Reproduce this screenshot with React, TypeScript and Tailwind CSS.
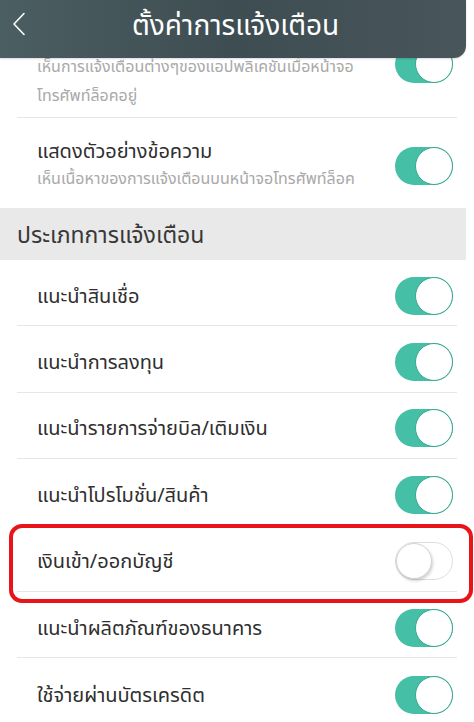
import React from "react";

type Item = { title: string; on: boolean };

const types: Item[] = [
  { title: "แนะนำสินเชื่อ", on: true },
  { title: "แนะนำการลงทุน", on: true },
  { title: "แนะนำรายการจ่ายบิล/เติมเงิน", on: true },
  { title: "แนะนำโปรโมชั่น/สินค้า", on: true },
  { title: "เงินเข้า/ออกบัญชี", on: false },
  { title: "แนะนำผลิตภัณฑ์ของธนาคาร", on: true },
  { title: "ใช้จ่ายผ่านบัตรเครดิต", on: true },
];

function Toggle({ on }: { on: boolean }) {
  if (on) {
    return (
      <div className="flex h-[38px] w-[58px] shrink-0 items-center justify-end rounded-full bg-[#45bfa6]">
        <div className="h-[38px] w-[38px] rounded-full border-[1.5px] border-[#3aa78f] bg-white" />
      </div>
    );
  }
  return (
    <div className="flex h-[38px] w-[58px] shrink-0 items-center justify-start rounded-full border border-[#dedede] bg-white">
      <div className="h-[36px] w-[36px] rounded-full border border-[#d4d4d4] bg-white shadow-[1px_2px_3px_rgba(0,0,0,0.18)]" />
    </div>
  );
}

export default function App() {
  return (
    <div
      className="relative h-[722px] w-[474px] overflow-hidden bg-white text-[#2f2f2f]"
      style={{ fontFamily: '"Noto Sans", "Noto Sans Thai", sans-serif' }}
    >
      <header className="absolute left-0 top-0 z-10 flex h-[58px] w-[466px] items-start rounded-br-[12px] bg-gradient-to-r from-[#4b5e62] via-[#3e4d52] to-[#48565b] pt-[8px] shadow-[0_1px_2px_rgba(0,0,0,0.15)]">
        <svg className="ml-[11px] mt-[4px] h-[24px] w-[16px]" viewBox="0 0 16 24" fill="none">
          <path d="M13 1.5 L3 12 L13 22.5" stroke="white" strokeWidth="1.6" strokeLinecap="round" strokeLinejoin="round" />
        </svg>
        <h1 className="ml-[105px] text-[28px] leading-[32px] text-white">ตั้งค่าการแจ้งเตือน</h1>
      </header>

      <div className="pt-[18px]">
        <div className="mx-[17px] flex h-[100px] items-start justify-between border-b border-[#e6e6e6] pl-5 pr-1">
          <div className="pt-[34px]">
            <div className="w-[320px] text-[16px] leading-[29px] text-[#a9a9a9]">
              เห็นการแจ้งเตือนต่างๆของแอปพลิเคชันเมื่อหน้าจอโทรศัพท์ล็อคอยู่
            </div>
          </div>
          <div className="mt-[27px]">
            <Toggle on />
          </div>
        </div>

        <div className="mx-[17px] flex h-[90px] items-center justify-between pl-5 pr-1">
          <div className="pt-[2px]">
            <div className="text-[20px] leading-[28px]">แสดงตัวอย่างข้อความ</div>
            <div className="text-[16px] leading-[26px] text-[#a9a9a9]">เห็นเนื้อหาของการแจ้งเตือนบนหน้าจอโทรศัพท์ล็อค</div>
          </div>
          <div className="mt-[6px]">
            <Toggle on />
          </div>
        </div>

        <div className="flex h-[52px] w-[466px] items-center bg-[#e9e9e9] pl-[17px] text-[23px] text-[#383838]">
          ประเภทการแจ้งเตือน
        </div>

        {types.map((t, i) => (
          <div
            key={t.title}
            className={`mx-[17px] flex h-[66.4px] items-center justify-between pl-5 pr-1 pt-[6px] ${
              i < types.length - 1 ? "border-b border-[#e6e6e6]" : ""
            }`}
          >
            <span className="text-[20px] leading-[28px]">{t.title}</span>
            <Toggle on={t.on} />
          </div>
        ))}
      </div>

      <div className="pointer-events-none absolute left-[9px] top-[524px] h-[79px] w-[464px] rounded-[13px] border-[4px] border-[#e8141a]" />
    </div>
  );
}
